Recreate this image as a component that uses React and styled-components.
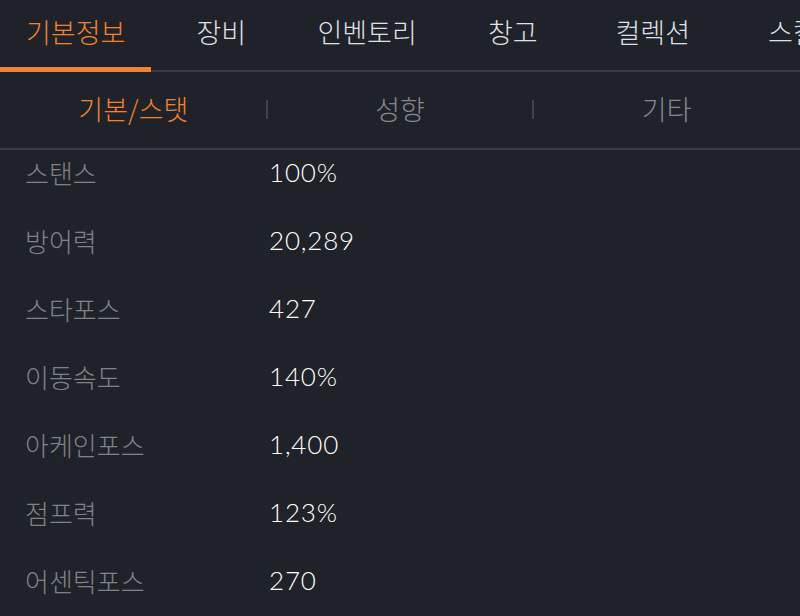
import React, { useState } from 'react'
import styled, { createGlobalStyle } from 'styled-components'

const GlobalStyle = createGlobalStyle`
   html, body {
      margin: 0;
      padding: 0;
      background: #1f2229;
   }
   body {
      font-family: 'Noto Sans CJK KR', 'Noto Sans', sans-serif;
      overflow: hidden;
   }
`

const Page = styled('div')`
   width: 800px;
   height: 616px;
   background: #1f2229;
   overflow: hidden;
`

const TabBar = styled('div')`
   display: flex;
   height: 72px;
   border-bottom: 2px solid #383b45;
   box-sizing: border-box;
   white-space: nowrap;
`

const Tab = styled('div')`
   position: relative;
   flex: none;
   display: flex;
   align-items: center;
   justify-content: center;
   min-width: 140px;
   box-sizing: border-box;
   padding: 0 26px 7px;
   font-size: 27px;
   font-weight: 300;
   color: ${(p) => (p.active ? '#f3822e' : '#dfe0e6')};
   &::after {
      content: '';
      display: ${(p) => (p.active ? 'block' : 'none')};
      position: absolute;
      left: 0;
      right: 0;
      bottom: -2px;
      height: 5px;
      background: #f3822e;
   }
`

const SubBar = styled('div')`
   display: grid;
   grid-template-columns: repeat(3, 1fr);
   height: 78px;
   border-bottom: 2px solid #383b45;
   box-sizing: border-box;
`

const SubTab = styled('div')`
   position: relative;
   display: flex;
   align-items: center;
   justify-content: center;
   padding-bottom: 4px;
   font-size: 27px;
   font-weight: 300;
   color: ${(p) => (p.active ? '#f3822e' : '#85888f')};
   &::before {
      content: '';
      display: ${(p) => (p.first ? 'none' : 'block')};
      position: absolute;
      left: -1px;
      top: 28px;
      width: 2px;
      height: 19px;
      background: #41444d;
   }
`

const StatList = styled('div')`
   display: flex;
   flex-direction: column;
   gap: 20px;
`

const Row = styled('div')`
   display: flex;
   align-items: center;
   height: 48px;
   padding: 0 0 4px 25px;
   box-sizing: border-box;
`

const Label = styled('span')`
   width: 244px;
   font-size: 26px;
   font-weight: 300;
   color: #7f828a;
`

const Value = styled('span')`
   font-family: 'Lato', 'Noto Sans', sans-serif;
   font-size: 26px;
   font-weight: 300;
   letter-spacing: 0.8px;
   color: #ffffff;
`

const tabs = ['기본정보', '장비', '인벤토리', '창고', '컬렉션', '스킬']
const subTabs = ['기본/스탯', '성향', '기타']
const stats = [
   ['스탠스', '100%'],
   ['방어력', '20,289'],
   ['스타포스', '427'],
   ['이동속도', '140%'],
   ['아케인포스', '1,400'],
   ['점프력', '123%'],
   ['어센틱포스', '270'],
]

export default function App() {
   const [tab, setTab] = useState(0)
   const [sub, setSub] = useState(0)

   return (
      <Page>
         <GlobalStyle />
         <TabBar>
            {tabs.map((t, i) => (
               <Tab key={t} active={tab === i} onClick={() => setTab(i)}>
                  {t}
               </Tab>
            ))}
         </TabBar>
         <SubBar>
            {subTabs.map((t, i) => (
               <SubTab key={t} first={i === 0} active={sub === i} onClick={() => setSub(i)}>
                  {t}
               </SubTab>
            ))}
         </SubBar>
         <StatList>
            {stats.map(([name, val]) => (
               <Row key={name}>
                  <Label>{name}</Label>
                  <Value>{val}</Value>
               </Row>
            ))}
         </StatList>
      </Page>
   )
}
